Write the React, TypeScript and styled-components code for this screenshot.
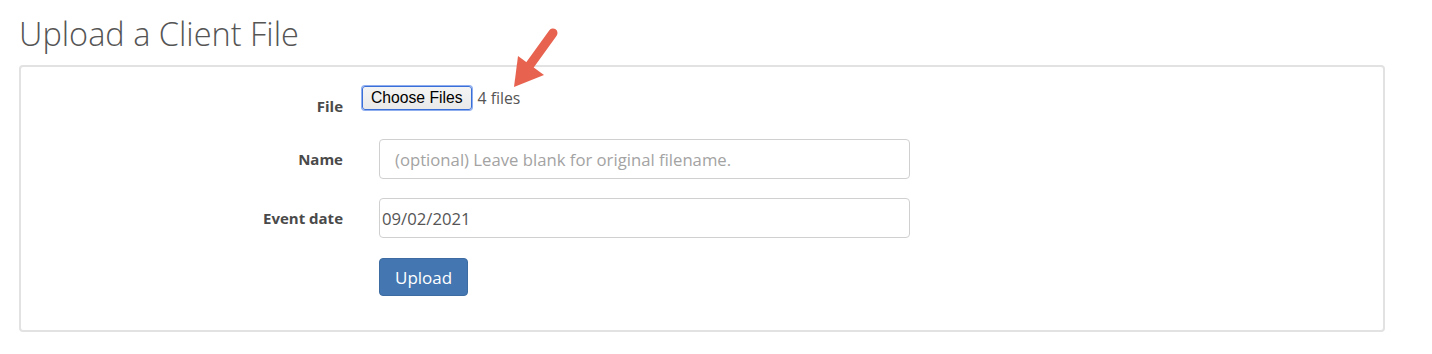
import React from "react";
import styled, { createGlobalStyle } from "styled-components";

const GlobalStyle = createGlobalStyle`
  html, body {
    margin: 0;
    padding: 0;
    background: #ffffff;
  }
  body {
    font-family: "Open Sans", "Liberation Sans", sans-serif;
    color: #333;
  }
`;

const Page = styled.div`
  position: relative;
  width: 1432px;
  height: 354px;
  padding: 13px 0 0 19px;
  box-sizing: border-box;
`;

const Title = styled.h1`
  margin: 0 0 10px 0;
  font-family: "Open Sans", sans-serif;
  font-weight: 300;
  font-size: 32.5px;
  line-height: 42px;
  color: #555;
`;

const Panel = styled.div`
  width: 1366px;
  height: 267px;
  box-sizing: border-box;
  border: 2px solid #e2e2e2;
  border-radius: 4px;
  padding-top: 19px;
  display: flex;
  flex-direction: column;
`;

const Row = styled.div<{ gap: number; align?: string }>`
  display: grid;
  grid-template-columns: 322px 1fr;
  column-gap: 19px;
  align-items: ${p => p.align || "center"};
  margin-bottom: ${p => p.gap}px;
`;

const Label = styled.label<{ top?: number }>`
  text-align: right;
  font-weight: 700;
  font-size: 15px;
  line-height: 20px;
  color: #4a4a4a;
  padding-top: ${p => p.top || 0}px;
`;

const Control = styled.div<{ indent?: number }>`
  display: flex;
  align-items: center;
  padding-left: ${p => p.indent || 0}px;
`;

const FileButton = styled.button`
  height: 24px;
  padding: 0 8px;
  box-sizing: border-box;
  background: linear-gradient(#f4f4f4, #e9e9e9);
  border: 1px solid #3b6fd8;
  border-radius: 3px;
  box-shadow: 0 0 0 1px #8eaef0;
  font-family: "Liberation Sans", Arial, sans-serif;
  font-size: 15.7px;
  color: #000;
`;

const FileCount = styled.span`
  margin-left: 6px;
  font-size: 15.8px;
  color: #555;
`;

const TextInput = styled.input<{ pad: number }>`
  width: 531px;
  height: 40px;
  box-sizing: border-box;
  border: 1px solid #d0d0d0;
  border-radius: 4px;
  padding: 0 12px 0 ${p => p.pad}px;
  font-family: "Open Sans", sans-serif;
  font-size: 16.7px;
  color: #555;
  outline: none;
  &::placeholder {
    color: #a3a3a3;
  }
`;

const UploadButton = styled.button`
  height: 38px;
  padding: 0 15px;
  background: #4477b1;
  border: 1px solid #3d6ca3;
  border-radius: 4px;
  color: #fff;
  font-family: "Open Sans", sans-serif;
  font-size: 17px;
`;

const Arrow = styled.svg`
  position: absolute;
  left: 505px;
  top: 25px;
`;

export default function App() {
  return (
    <Page>
      <GlobalStyle />
      <Title>Upload a Client File</Title>
      <Panel>
        <Row gap={23} align="start">
          <Label top={10}>File</Label>
          <Control>
            <FileButton type="button">Choose Files</FileButton>
            <FileCount>4 files</FileCount>
          </Control>
        </Row>
        <Row gap={19}>
          <Label>Name</Label>
          <Control indent={17}>
            <TextInput pad={15} placeholder="(optional) Leave blank for original filename." />
          </Control>
        </Row>
        <Row gap={20}>
          <Label>Event date</Label>
          <Control indent={17}>
            <TextInput pad={2} defaultValue="09/02/2021" />
          </Control>
        </Row>
        <Row gap={0}>
          <span />
          <Control indent={17}>
            <UploadButton type="button">Upload</UploadButton>
          </Control>
        </Row>
      </Panel>
      <Arrow width="60" height="70" viewBox="0 0 60 70">
        <line x1="48" y1="8" x2="22" y2="44" stroke="#e8634f" strokeWidth="9" strokeLinecap="round" />
        <polygon points="9,62 13,31 39,50" fill="#e8634f" />
      </Arrow>
    </Page>
  );
}
